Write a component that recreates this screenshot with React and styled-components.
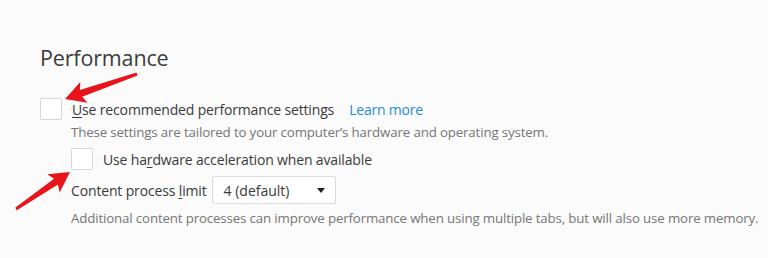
import React from 'react';
import styled, { createGlobalStyle } from 'styled-components';

const GlobalStyle = createGlobalStyle`
  html, body {
    margin: 0;
    padding: 0;
    background: #fbfbfb;
  }
  body {
    font-family: 'Open Sans', 'Noto Sans', sans-serif;
    color: #333;
  }
`;

const Page = styled.div`
  position: relative;
  width: 768px;
  height: 258px;
  overflow: hidden;
  padding: 43px 0 0 40px;
  box-sizing: border-box;
`;

const Heading = styled.h1`
  margin: 0 0 24px;
  font-size: 21.5px;
  font-weight: 400;
  line-height: 30px;
  color: #3b3b3b;
  letter-spacing: -0.15px;
`;

const Row = styled.div`
  display: flex;
  align-items: center;
  margin-left: ${(p) => p.indent || 0}px;
  margin-top: ${(p) => p.gap || 0}px;
  height: ${(p) => p.h || 24}px;
`;

const Box = styled.span`
  width: 20px;
  height: 20px;
  border: 1px solid #d7d7db;
  border-radius: 2px;
  background: #fff;
  margin-right: 10px;
  flex: none;
`;

const Label = styled.span`
  font-size: 14px;
  color: #3a3a3a;
  letter-spacing: -0.15px;
`;

const Key = styled.u`
  text-decoration-thickness: 1px;
  text-underline-offset: 2px;
`;

const Link = styled.a`
  margin-left: 15px;
  font-size: 14px;
  color: #1f8ad8;
  text-decoration: none;
  letter-spacing: -0.2px;
`;

const Desc = styled.p`
  margin: 0;
  margin-left: ${(p) => p.indent || 0}px;
  margin-top: ${(p) => p.gap || 0}px;
  font-size: 13.3px;
  line-height: 22px;
  color: #767676;
  letter-spacing: -0.15px;
`;

const Select = styled.div`
  display: flex;
  align-items: center;
  justify-content: space-between;
  width: 124px;
  height: 28px;
  margin-left: 5px;
  padding: 0 10px 0 11px;
  box-sizing: border-box;
  background: #fff;
  border: 1px solid #dcdcdc;
  border-radius: 2px;
  font-size: 14px;
  color: #3a3a3a;
`;

const Caret = styled.span`
  width: 0;
  height: 0;
  border-left: 4px solid transparent;
  border-right: 4px solid transparent;
  border-top: 5px solid #222;
`;

const Overlay = styled.svg`
  position: absolute;
  left: 0;
  top: 0;
  pointer-events: none;
`;

// red callout arrow: tip, tail in page coords
const arrowPath = (tip, tail, headLen = 20, headW = 11, shaftW = 3.5, tailW = 1.5) => {
  const dx = tail[0] - tip[0];
  const dy = tail[1] - tip[1];
  const len = Math.hypot(dx, dy);
  const ux = dx / len;
  const uy = dy / len;
  const nx = -uy;
  const ny = ux;
  const bx = tip[0] + ux * headLen;
  const by = tip[1] + uy * headLen;
  const pts = [
    tip,
    [bx + nx * headW, by + ny * headW],
    [bx + nx * shaftW - ux * 3, by + ny * shaftW - uy * 3],
    [tail[0] + nx * tailW, tail[1] + ny * tailW],
    [tail[0] - nx * tailW, tail[1] - ny * tailW],
    [bx - nx * shaftW - ux * 3, by - ny * shaftW - uy * 3],
    [bx - nx * headW, by - ny * headW],
  ];
  return pts.map((p) => p.map((v) => v.toFixed(1)).join(',')).join(' ');
};

const App = () => (
  <>
    <GlobalStyle />
    <Page>
      <Heading>Performance</Heading>
      <Row h={24}>
        <Box />
        <Label>
          <Key>U</Key>se recommended performance settings
        </Label>
        <Link href="#">Learn more</Link>
      </Row>
      <Desc indent={31}>
        These settings are tailored to your computer’s hardware and operating system.
      </Desc>
      <Row indent={31} h={28} gap={2}>
        <Box />
        <Label>
          Use ha<Key>r</Key>dware acceleration when available
        </Label>
      </Row>
      <Row indent={31} h={30} gap={2}>
        <Label>
          Content process <Key>l</Key>imit
        </Label>
        <Select>
          <span>4 (default)</span>
          <Caret />
        </Select>
      </Row>
      <Desc indent={31} gap={2}>
        Additional content processes can improve performance when using multiple tabs, but will also use more memory.
      </Desc>
      <Overlay width="768" height="258" viewBox="0 0 768 258">
        <polygon points={arrowPath([65, 99], [137, 74])} fill="#e8141b" />
        <polygon points={arrowPath([70, 172], [16, 209])} fill="#e8141b" />
      </Overlay>
    </Page>
  </>
);

export default App;
